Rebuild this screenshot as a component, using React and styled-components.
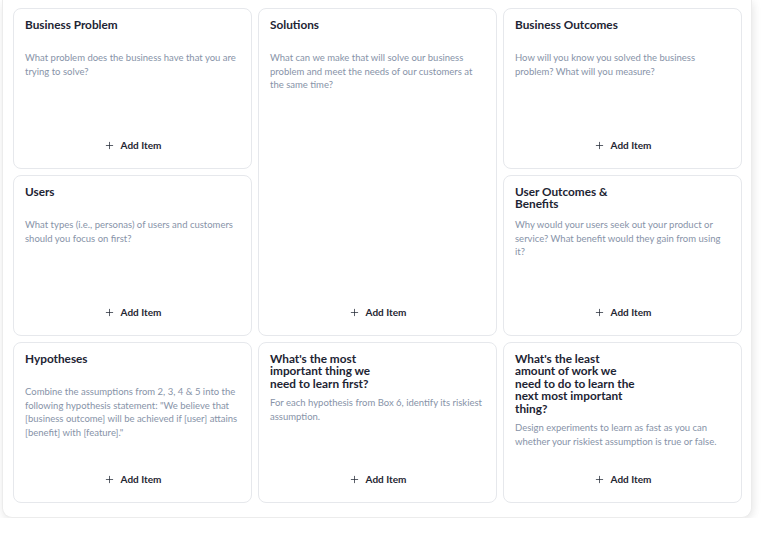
import React from 'react';
import styled, { createGlobalStyle } from 'styled-components';
import { Plus } from 'lucide-react';

const GlobalStyle = createGlobalStyle`
  body {
    margin: 0;
    background: #ffffff;
    font-family: Lato, "Open Sans", sans-serif;
  }
`;

const cards = [
  {
    id: 1,
    title: 'Business Problem',
    text: 'What problem does the business have that you are trying to solve?'
  },
  {
    id: 2,
    title: 'Solutions',
    text: 'What can we make that will solve our business problem and meet the needs of our customers at the same time?',
    tall: true
  },
  {
    id: 3,
    title: 'Business Outcomes',
    text: 'How will you know you solved the business problem? What will you measure?'
  },
  {
    id: 4,
    title: 'Users',
    text: 'What types (i.e., personas) of users and customers should you focus on first?'
  },
  {
    id: 5,
    title: 'User Outcomes & Benefits',
    text: 'Why would your users seek out your product or service? What benefit would they gain from using it?'
  },
  {
    id: 6,
    title: 'Hypotheses',
    text: 'Combine the assumptions from 2, 3, 4 & 5 into the following hypothesis statement: "We believe that [business outcome] will be achieved if [user] attains [benefit] with [feature]."'
  },
  {
    id: 7,
    title: "What's the most important thing we need to learn first?",
    text: 'For each hypothesis from Box 6, identify its riskiest assumption.'
  },
  {
    id: 8,
    title: "What's the least amount of work we need to do to learn the next most important thing?",
    text: 'Design experiments to learn as fast as you can whether your riskiest assumption is true or false.'
  }
];

const App = () => {
  return (
    <>
      <GlobalStyle />
      <Page>
        <Board>
          <Grid>
            {cards.map(card => (
              <Card key={card.id} tall={card.tall}>
                <Title>{card.title}</Title>
                <Description>{card.text}</Description>
                <AddButton>
                  <Plus size={11} strokeWidth={1.6} />
                  <span>Add Item</span>
                </AddButton>
              </Card>
            ))}
          </Grid>
        </Board>
      </Page>
    </>
  );
};

const Page = styled.div`
  padding-left: 2px;
  width: 750px;
`;

const Board = styled.div`
  background: #ffffff;
  border: 1px solid #ececec;
  border-top: none;
  border-radius: 0 0 10px 10px;
  box-shadow: 0 4px 10px rgba(0, 0, 0, 0.07), 3px 0 8px rgba(0, 0, 0, 0.04);
  padding: 8px 10px 14px 10px;
`;

const Grid = styled.div`
  display: grid;
  grid-template-columns: repeat(3, 239px);
  grid-template-rows: repeat(3, 161px);
  column-gap: 6px;
  row-gap: 6px;
`;

const Card = styled.div`
  display: flex;
  flex-direction: column;
  border: 1px solid #e6e8ec;
  border-radius: 8px;
  background: #ffffff;
  padding: 10px 11px 10px 11px;
  box-sizing: border-box;
  grid-row: ${props => (props.tall ? 'span 2' : 'auto')};
`;

const Title = styled.h3`
  margin: 0 0 6px;
  max-width: 124px;
  min-height: 26px;
  font-size: 11.8px;
  line-height: 12.4px;
  font-weight: 700;
  color: #1d2433;
`;

const Description = styled.p`
  margin: 0;
  font-size: 9.5px;
  line-height: 13.5px;
  color: #8793a8;
`;

const AddButton = styled.div`
  margin-top: auto;
  margin-bottom: 7px;
  align-self: center;
  display: flex;
  align-items: center;
  gap: 6px;
  font-size: 10px;
  font-weight: 700;
  color: #1f2633;

  svg {
    color: #1f2633;
  }
`;

export default App;
